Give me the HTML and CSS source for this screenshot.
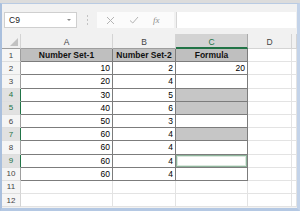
FILE: index.html
```html
<!DOCTYPE html>
<html lang="en">
<head>
  <meta charset="UTF-8">
  <title>Sheet</title>
  <link rel="stylesheet" href="styles.css">
</head>
<body>

<div class="window">
  <div class="formula-bar">
    <div class="name-box">
      <span>C9</span>
      <span class="drop"></span>
    </div>
    <div class="grip"><i></i><i></i><i></i></div>
    <div class="tools">
      <svg width="9" height="9" viewBox="0 0 9 9"><path d="M1 1 L8 8 M8 1 L1 8" stroke="#b4b4b4" stroke-width="1" fill="none"/></svg>
      <svg width="10" height="8" viewBox="0 0 10 8"><path d="M1 4.5 L3.8 7 L9 1" stroke="#b4b4b4" stroke-width="1" fill="none"/></svg>
      <span class="fx">fx</span>
    </div>
    <div class="input"></div>
  </div>

  <div class="sheet">
    <div class="corner"><span class="tri"></span></div>
    <div class="ch">A</div>
    <div class="ch">B</div>
    <div class="ch on">C</div>
    <div class="ch plain">D</div>
    <div class="ch plain"></div>

    <div class="rh">1</div>
    <div class="c t h">Number Set-1</div>
    <div class="c t h">Number Set-2</div>
    <div class="c t h">Formula</div>
    <div class="c"></div><div class="c"></div>

    <div class="rh">2</div>
    <div class="c t">10</div><div class="c t">2</div><div class="c t">20</div>
    <div class="c"></div><div class="c"></div>

    <div class="rh">3</div>
    <div class="c t">20</div><div class="c t">4</div><div class="c t"></div>
    <div class="c"></div><div class="c"></div>

    <div class="rh sel">4</div>
    <div class="c t">30</div><div class="c t">5</div><div class="c t g"></div>
    <div class="c"></div><div class="c"></div>

    <div class="rh sel">5</div>
    <div class="c t">40</div><div class="c t">6</div><div class="c t g"></div>
    <div class="c"></div><div class="c"></div>

    <div class="rh">6</div>
    <div class="c t">50</div><div class="c t">3</div><div class="c t"></div>
    <div class="c"></div><div class="c"></div>

    <div class="rh sel">7</div>
    <div class="c t">60</div><div class="c t">4</div><div class="c t g"></div>
    <div class="c"></div><div class="c"></div>

    <div class="rh">8</div>
    <div class="c t">60</div><div class="c t">4</div><div class="c t"></div>
    <div class="c"></div><div class="c"></div>

    <div class="rh sel">9</div>
    <div class="c t">60</div><div class="c t">4</div><div class="c t act"></div>
    <div class="c"></div><div class="c"></div>

    <div class="rh">10</div>
    <div class="c t">60</div><div class="c t">4</div><div class="c t"></div>
    <div class="c"></div><div class="c"></div>

    <div class="rh out">11</div>
    <div class="c"></div><div class="c"></div><div class="c"></div>
    <div class="c"></div><div class="c"></div>

    <div class="rh out">12</div>
    <div class="c"></div><div class="c"></div><div class="c"></div>
    <div class="c"></div><div class="c"></div>
  </div>
</div>

</body>
</html>
```

FILE: styles.css
```css
* {
  box-sizing: border-box;
}

body {
  margin: 0;
  background: #dcdcdc;
  font-family: 'Liberation Sans', Arial, sans-serif;
  color: #000;
}

.window {
  margin-top: 3px;
  height: 208px;
  background: #f1f1f1;
  border-top: 1px solid #b9cbe3;
  border-left: 2px solid #a9bfdd;
  border-right: 3px solid #c3d3e9;
  border-bottom: 3px solid #b4c8e3;
  overflow: hidden;
}

.formula-bar {
  display: flex;
  align-items: center;
  height: 30px;
  padding: 8px 1px 6px 2px;
}

.name-box {
  width: 73px;
  height: 16px;
  background: #fff;
  border: 1px solid #cfcfcf;
  display: flex;
  align-items: center;
  justify-content: space-between;
  padding: 0 5px 0 4px;
  font-size: 8.5px;
  color: #222;
}

.drop {
  width: 0;
  height: 0;
  border-left: 2px solid transparent;
  border-right: 2px solid transparent;
  border-top: 2px solid #8a8a8a;
}

.grip {
  width: 20px;
  display: flex;
  flex-direction: column;
  align-items: center;
  gap: 2px;
}

.grip i {
  width: 1px;
  height: 2px;
  background: #c3c3c3;
}

.tools {
  width: 77px;
  height: 16px;
  background: #fbfbfb;
  display: flex;
  align-items: center;
  gap: 14px;
  padding-left: 9px;
}

.fx {
  font-family: 'Liberation Serif', serif;
  font-style: italic;
  font-size: 9px;
  color: #8c8c8c;
}

.input {
  flex: 1;
  height: 16px;
  margin-left: 2px;
  background: #fff;
  border-left: 1px solid #d6d6d6;
}

.sheet {
  display: grid;
  grid-template-columns: 19px 92px 63px 72px 44px 1fr;
  grid-template-rows: 15px repeat(12, 13.2px);
  background: #fff;
  font-size: 8.5px;
}

.corner {
  position: relative;
  background: #f1f1f1;
  border-right: 1px solid #d4d4d4;
  border-bottom: 1px solid #9e9e9e;
}

.tri {
  position: absolute;
  right: 2px;
  bottom: 2px;
  width: 0;
  height: 0;
  border-left: 8px solid transparent;
  border-bottom: 8px solid #c2c2c2;
}

.ch {
  background: #f1f1f1;
  color: #444;
  border-right: 1px solid #d4d4d4;
  border-bottom: 1px solid #9e9e9e;
  display: flex;
  align-items: center;
  justify-content: center;
  padding-top: 2px;
}

.ch.plain {
  border-bottom-color: #d4d4d4;
}

.ch.on {
  background: #d3d3d3;
  color: #217346;
  border-bottom: 2px solid #217346;
  border-right-color: #ababab;
}

.rh {
  background: #f5f5f5;
  color: #444;
  border-right: 1px solid #9e9e9e;
  border-bottom: 1px solid #dedede;
  display: flex;
  align-items: center;
  justify-content: center;
  font-size: 8px;
}

.rh.out {
  border-right-color: #d4d4d4;
}

.rh.sel {
  background: #e1e1e1;
  color: #217346;
  border-right: 1px solid #217346;
}

.c {
  border-right: 1px solid #e3e3e3;
  border-bottom: 1px solid #e3e3e3;
  display: flex;
  align-items: center;
  justify-content: flex-end;
  padding: 0 2px;
}

.c.t {
  border-right-color: #7c7c7c;
  border-bottom-color: #7c7c7c;
}

.c.h {
  background: #bfbfbf;
  font-weight: bold;
  justify-content: center;
  color: #111;
}

.c.g {
  background: #c6c6c6;
}

.c.act {
  box-shadow: inset 0 0 0 1px #8fb49c, inset 0 0 0 2px #dbe9df;
}
```
